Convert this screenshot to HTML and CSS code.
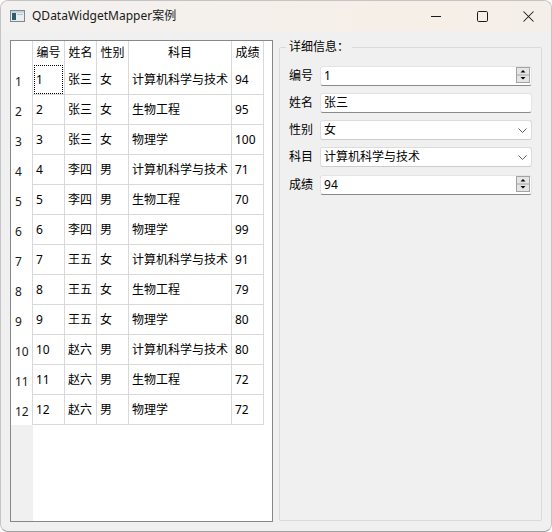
FILE: index.html
```html
<!DOCTYPE html>
<html lang="zh-CN">
<head>
<meta charset="utf-8">
<title>QDataWidgetMapper案例</title>
<link rel="stylesheet" href="styles.css">
</head>
<body>
<div class="window">
  <div class="titlebar">
    <svg class="appicon" width="15" height="12" viewBox="0 0 15 12">
      <rect x="0.5" y="0.5" width="14" height="11" fill="#e9eef2" stroke="#7d8791"/>
      <rect x="1" y="1" width="13" height="2" fill="#c6d2dc"/>
      <rect x="2" y="3" width="4" height="7" fill="#2f5d68"/>
      <rect x="7" y="4" width="6" height="1" fill="#b4c0ca"/>
    </svg>
    <span class="title">QDataWidgetMapper案例</span>
    <div class="controls">
      <div class="ctl"><svg width="10" height="10" viewBox="0 0 10 10"><path d="M0 5.5H10" stroke="#1b1b1b" stroke-width="1"/></svg></div>
      <div class="ctl"><svg width="11" height="11" viewBox="0 0 11 11"><rect x="0.5" y="0.5" width="10" height="10" rx="1.2" fill="none" stroke="#1b1b1b"/></svg></div>
      <div class="ctl"><svg width="11" height="11" viewBox="0 0 11 11"><path d="M0.5 0.5L10.5 10.5M10.5 0.5L0.5 10.5" stroke="#1b1b1b" stroke-width="1.05"/></svg></div>
    </div>
  </div>
  <div class="content">
    <div class="table">
      <div class="grid">
        <div class="corner"></div>
        <div class="hc">编号</div><div class="hc">姓名</div><div class="hc">性别</div><div class="hc">科目</div><div class="hc">成绩</div>

        <div class="rh">1</div><div class="c cur">1</div><div class="c">张三</div><div class="c">女</div><div class="c">计算机科学与技术</div><div class="c">94</div>
        <div class="rh">2</div><div class="c">2</div><div class="c">张三</div><div class="c">女</div><div class="c">生物工程</div><div class="c">95</div>
        <div class="rh">3</div><div class="c">3</div><div class="c">张三</div><div class="c">女</div><div class="c">物理学</div><div class="c">100</div>
        <div class="rh">4</div><div class="c">4</div><div class="c">李四</div><div class="c">男</div><div class="c">计算机科学与技术</div><div class="c">71</div>
        <div class="rh">5</div><div class="c">5</div><div class="c">李四</div><div class="c">男</div><div class="c">生物工程</div><div class="c">70</div>
        <div class="rh">6</div><div class="c">6</div><div class="c">李四</div><div class="c">男</div><div class="c">物理学</div><div class="c">99</div>
        <div class="rh">7</div><div class="c">7</div><div class="c">王五</div><div class="c">女</div><div class="c">计算机科学与技术</div><div class="c">91</div>
        <div class="rh">8</div><div class="c">8</div><div class="c">王五</div><div class="c">女</div><div class="c">生物工程</div><div class="c">79</div>
        <div class="rh">9</div><div class="c">9</div><div class="c">王五</div><div class="c">女</div><div class="c">物理学</div><div class="c">80</div>
        <div class="rh">10</div><div class="c">10</div><div class="c">赵六</div><div class="c">男</div><div class="c">计算机科学与技术</div><div class="c">80</div>
        <div class="rh">11</div><div class="c">11</div><div class="c">赵六</div><div class="c">男</div><div class="c">生物工程</div><div class="c">72</div>
        <div class="rh">12</div><div class="c">12</div><div class="c">赵六</div><div class="c">男</div><div class="c">物理学</div><div class="c">72</div>
      </div>
      <div class="filler"><div class="vh-fill"></div></div>
    </div>

    <fieldset class="group">
      <legend>详细信息：</legend>
      <div class="form">
        <span class="lbl">编号</span>
        <div class="field edit">
          <span class="val">1</span>
          <svg class="spin" width="14" height="16" viewBox="0 0 14 16">
            <rect x="0.5" y="0.5" width="13" height="15" fill="#e5e5e5" stroke="#a3a3a3"/>
            <path d="M0.5 8H13.5" stroke="#a3a3a3"/>
            <path d="M4.5 5.5L7 3L9.5 5.5Z" fill="#000"/>
            <path d="M4.5 10L9.5 10L7 12.5Z" fill="#000"/>
          </svg>
        </div>
        <span class="lbl">姓名</span>
        <div class="field edit"><span class="val">张三</span></div>
        <span class="lbl">性别</span>
        <div class="field combo">
          <span class="val">女</span>
          <svg class="chev" width="9" height="5" viewBox="0 0 9 5"><path d="M0.5 0.5L4.5 4.5L8.5 0.5" fill="none" stroke="#5f5f5f"/></svg>
        </div>
        <span class="lbl">科目</span>
        <div class="field combo">
          <span class="val">计算机科学与技术</span>
          <svg class="chev" width="9" height="5" viewBox="0 0 9 5"><path d="M0.5 0.5L4.5 4.5L8.5 0.5" fill="none" stroke="#5f5f5f"/></svg>
        </div>
        <span class="lbl">成绩</span>
        <div class="field edit last">
          <span class="val">94</span>
          <svg class="spin" width="14" height="16" viewBox="0 0 14 16">
            <rect x="0.5" y="0.5" width="13" height="15" fill="#e5e5e5" stroke="#a3a3a3"/>
            <path d="M0.5 8H13.5" stroke="#a3a3a3"/>
            <path d="M4.5 5.5L7 3L9.5 5.5Z" fill="#000"/>
            <path d="M4.5 10L9.5 10L7 12.5Z" fill="#000"/>
          </svg>
        </div>
      </div>
    </fieldset>
  </div>
</div>
</body>
</html>
```

FILE: styles.css
```css
html, body {
  margin: 0;
  padding: 0;
  background: #ffffff;
}

body {
  font-family: "Noto Sans", "Noto Sans CJK SC", sans-serif;
  font-size: 12px;
  color: #000;
}

.window {
  width: 552px;
  height: 532px;
  box-sizing: border-box;
  border: 1px solid #c4c4c4;
  border-bottom-color: #9e9e9e;
  border-radius: 8px;
  overflow: hidden;
  background: #f0f0f0;
  display: flex;
  flex-direction: column;
}

.titlebar {
  height: 30px;
  flex: none;
  display: flex;
  align-items: center;
  background: linear-gradient(to right, #f2f1f0, #f6efe8 70%, #f5efe9);
}

.appicon {
  margin-left: 9px;
  flex: none;
}

.title {
  margin-left: 7px;
  font-size: 12px;
  line-height: 16px;
  color: #1a1a1a;
}

.controls {
  margin-left: auto;
  display: flex;
}

.ctl {
  width: 46px;
  height: 30px;
  display: flex;
  align-items: center;
  justify-content: center;
}

.content {
  flex: 1;
  display: flex;
  padding: 9px;
  gap: 6px;
  min-height: 0;
}

/* table view */
.table {
  width: 263px;
  flex: none;
  box-sizing: border-box;
  border: 1px solid #878787;
  background: #fff;
  display: flex;
  flex-direction: column;
}

.grid {
  display: grid;
  grid-template-columns: 22px 32px 32px 32px 103px 32px;
  grid-template-rows: 24px repeat(12, 30px);
}

.corner,
.rh,
.hc,
.c {
  box-sizing: border-box;
  border-right: 1px solid #d9d9d9;
  white-space: nowrap;
  overflow: hidden;
}

.hc {
  text-align: center;
  line-height: 24px;
}

.rh {
  padding: 3px 0 0 4px;
  line-height: 27px;
  color: #1a1a1a;
}

.c {
  border-bottom: 1px solid #d9d9d9;
  padding-left: 3px;
  line-height: 29px;
}

.cur {
  position: relative;
}

.cur::after {
  content: "";
  position: absolute;
  left: 1px;
  right: 1px;
  top: 0;
  bottom: 0;
  border: 1px dotted #000;
}

.filler {
  flex: 1;
  display: flex;
}

.vh-fill {
  width: 22px;
  background: #f0f0f0;
}

/* group box */
.group {
  flex: none;
  width: 263px;
  min-width: 0;
  box-sizing: border-box;
  margin: 0 0 1px 0;
  padding: 0 9px 0 6px;
  border: 1px solid #dadada;
  border-radius: 2px;
}

.group legend {
  padding: 0 3px;
  line-height: 14px;
  font-size: 12px;
}

.form {
  margin: 12px 0 0 3px;
  display: grid;
  grid-template-columns: auto 1fr;
  column-gap: 7px;
  row-gap: 7px;
  align-items: center;
}

.lbl {
  line-height: 16px;
}

.field {
  height: 20px;
  box-sizing: border-box;
  background: #fff;
  border-radius: 3px;
  display: flex;
  align-items: center;
  padding-left: 3px;
}

.field .val {
  flex: 1;
  line-height: 16px;
  white-space: nowrap;
}

.edit {
  border: 1px solid #e4e4e4;
  border-bottom-color: #8a8a8a;
}

.combo {
  border: 1px solid #dcdcdc;
  border-bottom-color: #cdcdcd;
}

.last {
  margin-top: 1px;
}

.spin {
  align-self: flex-start;
  margin-right: 1px;
  flex: none;
}

.chev {
  margin-right: 4px;
  flex: none;
}
```
